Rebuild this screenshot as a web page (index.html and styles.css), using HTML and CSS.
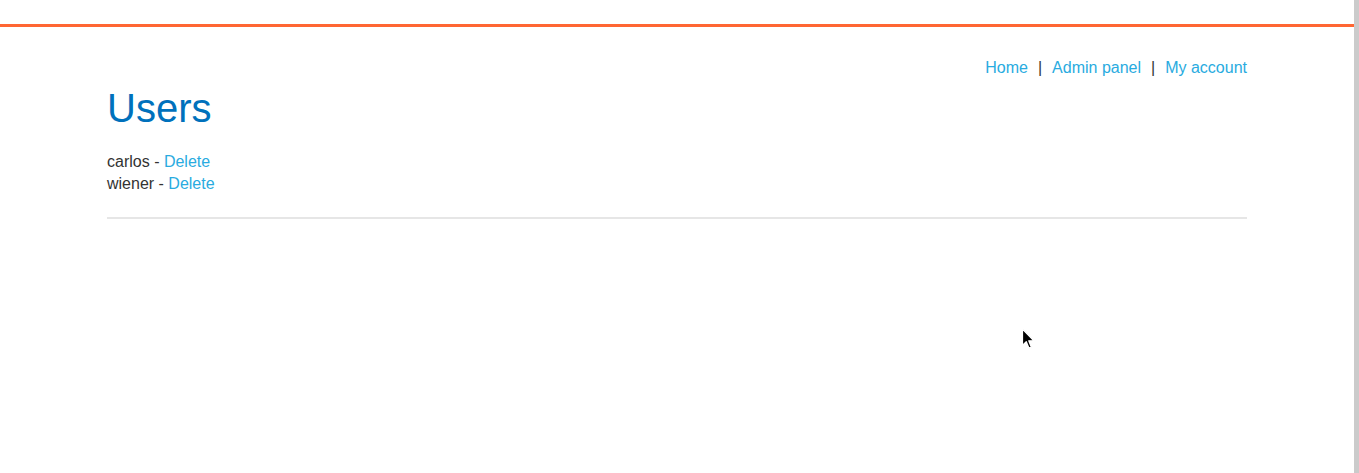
FILE: index.html
```html
<!DOCTYPE html>
<html lang="en">
<head>
<meta charset="utf-8">
<title>Users</title>
<link rel="stylesheet" href="styles.css">
</head>
<body>
<div class="page">
  <div class="main">
    <div class="topbar"></div>
    <div class="container">
      <nav class="top-links">
        <a href="#">Home</a><span class="sep">|</span><a href="#">Admin panel</a><span class="sep">|</span><a href="#">My account</a>
      </nav>
      <h1 class="title">Users</h1>
      <div class="users">
        <div class="user">carlos - <a href="#">Delete</a></div>
        <div class="user">wiener - <a href="#">Delete</a></div>
      </div>
      <hr class="rule">
    </div>
  </div>
  <div class="scrollbar"></div>
</div>
<svg class="cursor" width="16" height="24" viewBox="0 0 14 22" aria-hidden="true">
  <path d="M1 1 L1 16 L4.5 12.5 L7 18.5 L9.2 17.6 L6.8 11.8 L11.5 11.8 Z" fill="#000" stroke="#fff" stroke-width="1.2" stroke-linejoin="round"/>
</svg>
</body>
</html>
```
FILE: styles.css
```css
html, body {
  margin: 0;
  padding: 0;
  height: 100%;
  background: #fff;
}
body {
  font-family: "Liberation Sans", Arial, sans-serif;
  font-size: 16px;
  color: #333332;
}
.page {
  display: flex;
  min-height: 100%;
}
.main {
  flex: 1;
}
.scrollbar {
  width: 5px;
  background: #cbcbcb;
}
.topbar {
  height: 24px;
  border-bottom: 3px solid #ff6633;
}
.container {
  width: 1140px;
  margin: 0 auto;
}
a {
  color: #29abe0;
  text-decoration: none;
}
.top-links {
  display: flex;
  justify-content: flex-end;
  line-height: 22px;
  padding-top: 30px;
}
.sep {
  margin: 0 10px;
  color: #333332;
}
.title {
  margin: 5px 0 0;
  font-size: 40px;
  font-weight: normal;
  line-height: 48px;
  color: #0071bc;
}
.users {
  margin-top: 19px;
  line-height: 22px;
}
.rule {
  margin: 22px 0 0;
  border: 0;
  height: 2px;
  background: #e6e6e6;
}
.cursor {
  position: absolute;
  left: 1021px;
  top: 328px;
}
```
